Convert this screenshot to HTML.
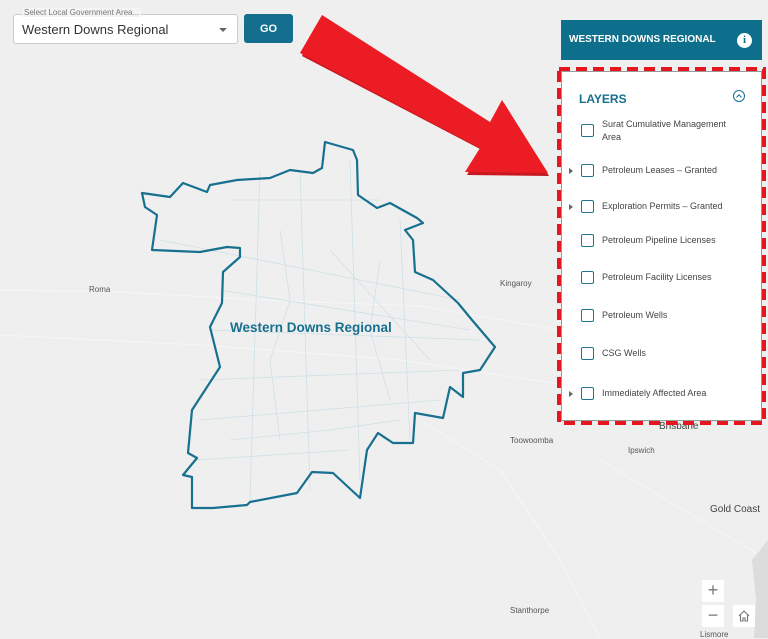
<!DOCTYPE html>
<html><head><meta charset="utf-8"><style>
*{margin:0;padding:0;box-sizing:border-box}
body{width:768px;height:638px;overflow:hidden;background:#efefef;font-family:"Liberation Sans",sans-serif;position:relative}
.abs{position:absolute}
.lbl{position:absolute;font-size:8px;color:#555}
.sel{left:13px;top:14px;width:225px;height:30px;background:#fff;border:1px solid #ccc;border-radius:3px}
.sel .cap{position:absolute;left:8px;top:-7px;background:#f4f4f4;padding:0 2px;font-size:8px;color:#777}
.sel .val{position:absolute;left:8px;top:7px;font-size:13px;color:#333}
.sel .car{position:absolute;right:10px;top:13px;border-left:4px solid transparent;border-right:4px solid transparent;border-top:4px solid #666}
.go{left:244px;top:14px;width:49px;height:29px;background:#146f8f;border-radius:3px;color:#fff;font-weight:bold;font-size:11px;text-align:center;line-height:30px}
.hdr{left:561px;top:20px;width:201px;height:40px;background:#0e6f8c;color:#fff;font-weight:bold;font-size:10px;line-height:40px;padding-left:8px}
.info{position:absolute;right:10px;top:13px;width:15px;height:15px;border-radius:50%;background:#fff;color:#0e6f8c;font-size:11px;line-height:15px;text-align:center;font-family:"Liberation Serif",serif;font-weight:bold}
.panel{left:561px;top:71px;width:201px;height:350px;background:#fff;border:1px solid #999}
.layers{position:absolute;left:17px;top:20px;color:#16708f;font-weight:bold;font-size:12px}
.coll{position:absolute;left:171px;top:18px;width:12px;height:12px;border:1.3px solid #16708f;border-radius:50%}
.coll:after{content:"";position:absolute;left:3px;top:4px;width:3px;height:3px;border-left:1.3px solid #16708f;border-top:1.3px solid #16708f;transform:rotate(45deg)}
.it{position:absolute;left:0;width:200px;font-size:9px;color:#444}
.cb{position:absolute;left:19px;width:13px;height:13px;border:1.5px solid #1e7594;border-radius:2px}
.tri{position:absolute;left:7px;border-top:3px solid transparent;border-bottom:3px solid transparent;border-left:4px solid #666}
.it span{position:absolute;left:40px;line-height:13px}
.zb{position:absolute;width:22px;height:22px;background:#fff;color:#777;text-align:center;font-size:18px;line-height:21px}
</style></head><body>
<svg class="abs" style="left:0;top:0" width="768" height="638">
<g fill="none" stroke="#f8f8f8" stroke-width="1" opacity=".8">
<path d="M0 290 L120 292 L260 300 L420 306 L560 330 L768 360"/>
<path d="M0 335 L200 345 L400 360 L600 390"/>
<path d="M420 420 L500 470 L560 560 L600 638"/>
<path d="M600 460 L700 520 L768 560"/>
</g>
<path d="M752 560 L756 600 L754 638 L768 638 L768 540 Z" fill="#dcdcdc"/>
<g fill="none" stroke="#cfe0e7" stroke-width=".8">
<path d="M160 240 L460 300"/><path d="M210 330 L480 340"/><path d="M220 290 L470 330"/><path d="M200 420 L440 400"/>
<path d="M260 170 L250 500"/><path d="M300 170 L310 490"/><path d="M350 160 L360 480"/><path d="M400 220 L410 440"/>
<path d="M200 380 L460 370"/><path d="M230 200 L380 200"/><path d="M195 460 L350 450"/><path d="M330 250 L430 360"/>
<path d="M280 230 L290 300 L270 360 L280 440"/><path d="M380 260 L370 330 L390 400"/><path d="M230 440 L330 430 L400 420"/>
</g>
<path fill="none" stroke="#17708f" stroke-width="2.2" stroke-linejoin="round" d="M325 142 L353 150 L357 160 L358 195 L377 208 L390 203 L417 218 L423 223 L405 230 L413 240 L415 272 L433 280 L458 303 L472 320 L495 347 L480 370 L463 373 L463 397 L450 387 L443 418 L415 413 L413 443 L393 443 L378 433 L367 450 L360 498 L333 473 L312 472 L297 493 L250 502 L247 505 L213 508 L192 508 L192 477 L183 475 L197 458 L188 453 L192 410 L207 387 L220 367 L210 327 L222 303 L223 272 L240 257 L240 248 L227 247 L200 252 L152 250 L157 215 L145 207 L142 193 L170 197 L183 183 L207 192 L210 185 L237 180 L270 178 L290 170 L313 173 L322 168 Z"/>
<text x="230" y="332" font-family="Liberation Sans" font-weight="bold" font-size="13.5" fill="#17708f">Western Downs Regional</text>
<polygon points="324,18 492,124 504,103 549,176 467,175 482,150 302,56" fill="#c81820"/>
<polygon points="322,15 490,122 502,100 548,173 465,172 480,148 300,53" fill="#ec1c24"/>
</svg>
<div class="lbl" style="left:89px;top:285px">Roma</div>
<div class="lbl" style="left:500px;top:279px">Kingaroy</div>
<div class="lbl" style="left:510px;top:436px">Toowoomba</div>
<div class="lbl" style="left:628px;top:446px">Ipswich</div>
<div class="lbl" style="left:659px;top:421px;font-size:10px;color:#444">Brisbane</div>
<div class="lbl" style="left:710px;top:504px;font-size:10px;color:#444">Gold Coast</div>
<div class="lbl" style="left:510px;top:606px">Stanthorpe</div>
<div class="lbl" style="left:700px;top:630px">Lismore</div>

<div class="abs sel"><div class="cap">Select Local Government Area...</div><div class="val">Western Downs Regional</div><div class="car"></div></div>
<div class="abs go">GO</div>
<div class="abs hdr">WESTERN DOWNS REGIONAL<div class="info">i</div></div>
<div class="abs panel">
<div class="layers">LAYERS</div><div class="coll"></div>
<div class="it" style="top:49px"><div class="cb" style="top:3px"></div><span style="top:-3px">Surat Cumulative Management<br>Area</span></div>
<div class="it" style="top:92px"><div class="tri" style="top:4px"></div><div class="cb"></div><span>Petroleum Leases – Granted</span></div>
<div class="it" style="top:128px"><div class="tri" style="top:4px"></div><div class="cb"></div><span>Exploration Permits – Granted</span></div>
<div class="it" style="top:162px"><div class="cb"></div><span>Petroleum Pipeline Licenses</span></div>
<div class="it" style="top:199px"><div class="cb"></div><span>Petroleum Facility Licenses</span></div>
<div class="it" style="top:237px"><div class="cb"></div><span>Petroleum Wells</span></div>
<div class="it" style="top:275px"><div class="cb"></div><span>CSG Wells</span></div>
<div class="it" style="top:315px"><div class="tri" style="top:4px"></div><div class="cb"></div><span>Immediately Affected Area</span></div>
</div>
<svg class="abs" style="left:0;top:0" width="768" height="638"><rect x="559" y="69" width="205" height="354" fill="none" stroke="#e5161d" stroke-width="4" stroke-dasharray="11 6"/></svg>
<div class="zb" style="left:702px;top:580px">+</div>
<div class="zb" style="left:702px;top:605px">−</div>
<div class="zb" style="left:733px;top:605px"><svg width="14" height="14" viewBox="0 0 14 14" style="margin-top:4px"><path d="M2 7 L7 2 L12 7 M3.5 6 V12 H6 V9 H8 V12 H10.5 V6" fill="none" stroke="#777" stroke-width="1.1"/></svg></div>
</body></html>
